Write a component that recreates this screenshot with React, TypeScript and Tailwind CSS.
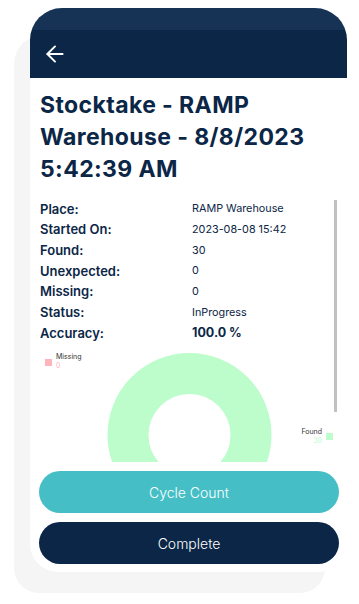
import { ArrowLeft } from 'lucide-react';

const rows: { label: string; value: string; strong?: boolean }[] = [
  { label: 'Place:', value: 'RAMP Warehouse' },
  { label: 'Started On:', value: '2023-08-08 15:42' },
  { label: 'Found:', value: '30' },
  { label: 'Unexpected:', value: '0' },
  { label: 'Missing:', value: '0' },
  { label: 'Status:', value: 'InProgress' },
  { label: 'Accuracy:', value: '100.0 %', strong: true },
];

function AccuracyChart() {
  return (
    <svg width="297" height="160" viewBox="0 0 297 160" className="block shrink-0">
      <circle cx="149.5" cy="91" r="61.5" fill="none" stroke="#bcfdcb" strokeWidth="41" />
      <rect x="5" y="15" width="7" height="7" fill="#ffb3ba" />
      <text x="16" y="15" fontSize="7" fill="#333333">Missing</text>
      <text x="16" y="24" fontSize="7" fill="#ffb3ba">0</text>
      <text x="282" y="90" fontSize="7" fill="#333333" textAnchor="end">Found</text>
      <text x="282" y="99" fontSize="7" fill="#bcfdcb" textAnchor="end">30</text>
      <rect x="286" y="89" width="7" height="7" fill="#bcfdcb" />
    </svg>
  );
}

export default function App() {
  return (
    <div
      className="h-[604px] w-[359px] overflow-hidden bg-white pt-[8px] pl-[30px]"
      style={{ fontFamily: 'Inter, "Noto Sans", sans-serif' }}
    >
      <div className="flex h-[564px] w-[317px] flex-col overflow-hidden rounded-t-[32px] rounded-b-[28px] bg-white shadow-[-19px_24px_0_-3px_#f5f5f5]">
        <div className="h-[22px] shrink-0 bg-[#163355]" />
        <div className="flex h-[48px] shrink-0 items-center bg-[#0b2646] pl-[12px]">
          <ArrowLeft size={26} strokeWidth={1.8} color="#ffffff" />
        </div>

        <div className="relative min-h-0 flex-1 overflow-hidden px-[10px]">
          <h1 className="pt-[11px] text-[23px] font-bold leading-[32px] tracking-[0.4px] text-[#0b2646]">
            Stocktake - RAMP Warehouse - 8/8/2023 5:42:39 AM
          </h1>

          <div className="mt-[14px] grid grid-cols-[152px_1fr] text-[#0b2646]">
            {rows.map((r) => (
              <div key={r.label} className="contents">
                <span className="flex h-[20.7px] items-center text-[13px] font-semibold">{r.label}</span>
                <span
                  className={`flex h-[20.7px] items-center ${
                    r.strong ? 'text-[12.5px] font-bold' : 'text-[10.8px] font-normal'
                  }`}
                >
                  {r.value}
                </span>
              </div>
            ))}
          </div>

          <AccuracyChart />

          <div className="absolute left-[304px] top-[122px] h-[212px] w-[3px] bg-[#c1c1c1]" />
        </div>

        <div className="flex shrink-0 flex-col gap-[9px] px-[9px] pt-[9px] pb-[8px]">
          <button className="h-[42px] w-[300px] rounded-full bg-[#45bec6] text-[14px] font-light text-white">
            Cycle Count
          </button>
          <button className="h-[42px] w-[300px] rounded-full bg-[#0b2646] text-[14px] font-light text-white">
            Complete
          </button>
        </div>
      </div>
    </div>
  );
}
